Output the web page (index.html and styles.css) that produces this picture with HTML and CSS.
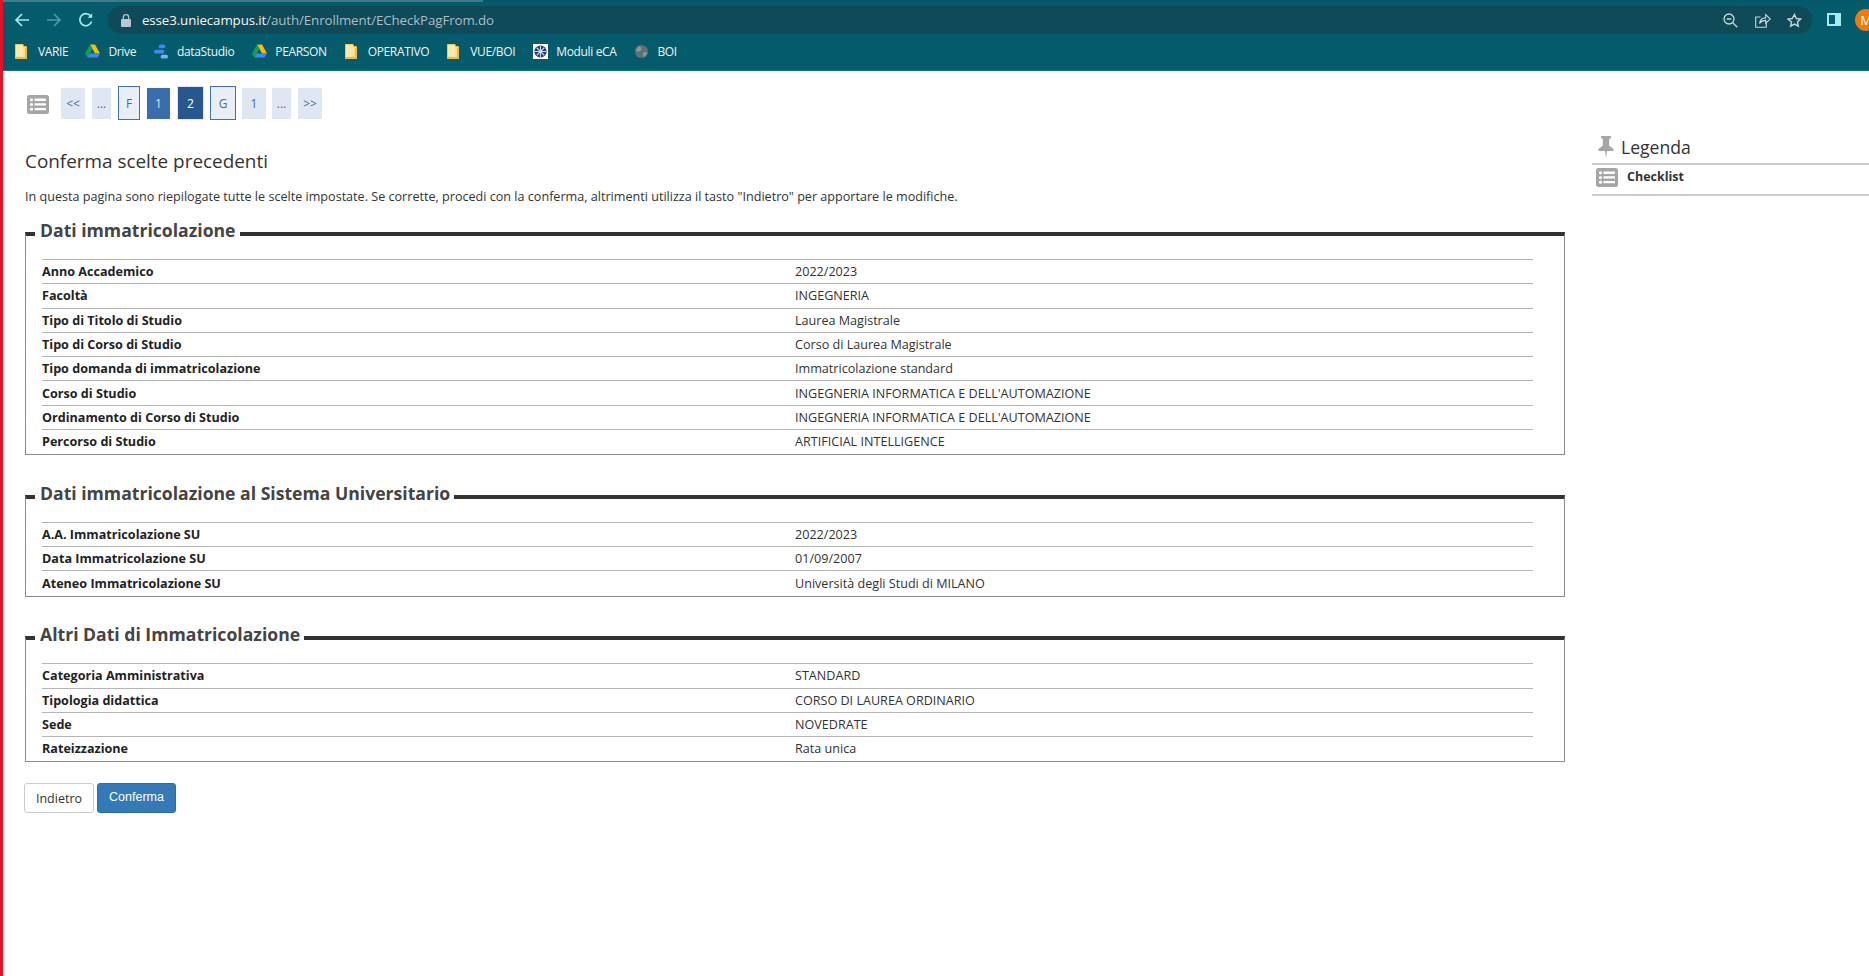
FILE: index.html
```html
<!DOCTYPE html>
<html lang="it">
<head>
<meta charset="utf-8">
<title>Conferma scelte precedenti</title>
<link rel="stylesheet" href="styles.css">
</head>
<body>
<svg class="defs" width="0" height="0" aria-hidden="true">
  <symbol id="folder" viewBox="0 0 12 15"><path d="M.5.5h7.5l.8 2.2h2.7v11.8H.5z" fill="#fde293" stroke="#f3c64c"/><path d="M1 .8h6.5v13.2H1z" fill="#fdeaa8"/><path d="M10 4h1.5v10.5H1V13h9z" fill="#eeb73c"/></symbol>
  <symbol id="drive" viewBox="0 0 16 15"><path d="M5.3 0h5.4l5.3 9.5h-5.3z" fill="#fbbc04"/><path d="M5.3 0 0 9.5 2.7 14l5.2-9.3z" fill="#0f9d58"/><path d="M5.2 9.5H16L13.3 14H2.7z" fill="#4285f4"/></symbol>
  <symbol id="list" viewBox="0 0 22 19"><rect width="22" height="19" rx="2.5" fill="#a6a6a6"/><g fill="#fff"><circle cx="4.5" cy="4.8" r="1.6"/><circle cx="4.5" cy="9.5" r="1.6"/><circle cx="4.5" cy="14.2" r="1.6"/><rect x="7.5" y="3.6" width="11.5" height="2.3" rx=".6"/><rect x="7.5" y="8.3" width="11.5" height="2.3" rx=".6"/><rect x="7.5" y="13" width="11.5" height="2.3" rx=".6"/></g></symbol>
</svg>
<div class="page">
  <header class="chrome">
    <div class="tabstrip"><div class="tab-edge"></div></div>
    <div class="toolbar">
      <svg class="nav" width="16" height="16" viewBox="0 0 16 16" fill="none" stroke="#a6e8e8" stroke-width="1.7"><path d="M15 8H2M8 2 2 8l6 6"/></svg>
      <svg class="nav" width="16" height="16" viewBox="0 0 16 16" fill="none" stroke="#4f9aa3" stroke-width="1.7"><path d="M1 8h13M8 2l6 6-6 6"/></svg>
      <svg class="nav" width="16" height="16" viewBox="0 0 16 16" fill="none" stroke="#a6e8e8" stroke-width="1.7"><path d="M13.600 9.500A6 6 0 1 1 12.600 4"/><path d="M14.200 1.200v4.600H9.600z" fill="#a6e8e8" stroke="none"/></svg>
      <div class="omnibox">
        <svg class="lock" width="10" height="13" viewBox="0 0 10 13"><path d="M2.300 5V3.400a2.700 2.700 0 0 1 5.400 0V5" fill="none" stroke="#b9c9cd" stroke-width="1.300"/><rect y="5" width="10" height="8" rx="1.200" fill="#b9c9cd"/></svg>
        <span class="url"><span class="host">esse3.uniecampus.it</span>/auth/Enrollment/ECheckPagFrom.do</span>
        <div class="omni-actions">
          <svg width="15" height="15" viewBox="0 0 15 15" fill="none" stroke="#c9d6d9" stroke-width="1.300"><circle cx="6" cy="6" r="5"/><path d="M3.700 6h4.600M9.700 9.700l4.600 4.600"/></svg>
          <svg width="16" height="15" viewBox="0 0 16 15" fill="none" stroke="#c9d6d9" stroke-width="1.100"><path d="M5.500 4H.7v10.300h10.600V10"/><path d="M4.500 10.500C5 7 7.500 4.900 10.700 4.900V1.600l4.600 4.400-4.600 4.200V7.400C8 7.400 6 8.400 4.500 10.500z"/></svg>
          <svg width="15" height="15" viewBox="0 0 24 24" fill="none" stroke="#c9d6d9" stroke-width="2.200"><path d="m12 2.500 2.900 6.300 6.900.8-5.100 4.700 1.400 6.800-6.100-3.400-6.100 3.400 1.400-6.800L1.300 9.600l6.900-.8z"/></svg>
        </div>
      </div>
      <div class="side-panel"></div>
      <div class="avatar">M</div>
    </div>
    <nav class="bookmarks">
      <span class="bm"><svg class="ico"><use href="#folder"/></svg>VARIE</span>
      <span class="bm"><svg class="ico ico-w"><use href="#drive"/></svg>Drive</span>
      <span class="bm"><svg class="ico ico-w" viewBox="0 0 16 15"><rect x="5" y="0" width="7" height="4" rx="2" fill="#4285f4"/><rect x="0" y="5.500" width="11" height="4" rx="2" fill="#4285f4"/><rect x="7" y="11" width="8" height="4" rx="2" fill="#7baaf7"/></svg>dataStudio</span>
      <span class="bm"><svg class="ico ico-w"><use href="#drive"/></svg>PEARSON</span>
      <span class="bm"><svg class="ico"><use href="#folder"/></svg>OPERATIVO</span>
      <span class="bm"><svg class="ico"><use href="#folder"/></svg>VUE/BOI</span>
      <span class="bm"><svg class="ico ico-w" viewBox="0 0 16 16"><rect width="16" height="16" fill="#fff"/><circle cx="8" cy="8" r="6.500" fill="#24386b"/><path d="M4 4l8 8M12 4l-8 8M8 2v12M2 8h12" stroke="#cfd7ea" stroke-width="1.200"/></svg>Moduli eCA</span>
      <span class="bm"><svg class="ico ico-w" viewBox="0 0 16 16"><circle cx="8" cy="8" r="7" fill="#5f6f75"/><path d="M5 2c3 1 4 3 2 5s-4 1-5 0M10 9c2-1 4 0 4 1l-3 4c-1-1-2-3-1-5z" fill="#8a979b"/></svg>BOI</span>
    </nav>
  </header>

  <div class="content">
    <main class="main">
      <div class="steps">
        <svg class="step-list"><use href="#list"/></svg>
        <span class="step s1">&lt;&lt;</span>
        <span class="step s2">...</span>
        <span class="step s3 outlined">F</span>
        <span class="step s4 done">1</span>
        <span class="step s5 current">2</span>
        <span class="step s6 outlined">G</span>
        <span class="step s7">1</span>
        <span class="step s2 s8">...</span>
        <span class="step s1 s9">&gt;&gt;</span>
      </div>
      <h1 class="title">Conferma scelte precedenti</h1>
      <p class="intro">In questa pagina sono riepilogate tutte le scelte impostate. Se corrette, procedi con la conferma, altrimenti utilizza il tasto "Indietro" per apportare le modifiche.</p>

      <fieldset class="box">
        <legend>Dati immatricolazione</legend>
        <dl class="rows">
          <div class="row"><dt>Anno Accademico</dt><dd>2022/2023</dd></div>
          <div class="row"><dt>Facoltà</dt><dd>INGEGNERIA</dd></div>
          <div class="row"><dt>Tipo di Titolo di Studio</dt><dd>Laurea Magistrale</dd></div>
          <div class="row"><dt>Tipo di Corso di Studio</dt><dd>Corso di Laurea Magistrale</dd></div>
          <div class="row"><dt>Tipo domanda di immatricolazione</dt><dd>Immatricolazione standard</dd></div>
          <div class="row"><dt>Corso di Studio</dt><dd>INGEGNERIA INFORMATICA E DELL'AUTOMAZIONE</dd></div>
          <div class="row"><dt>Ordinamento di Corso di Studio</dt><dd>INGEGNERIA INFORMATICA E DELL'AUTOMAZIONE</dd></div>
          <div class="row"><dt>Percorso di Studio</dt><dd>ARTIFICIAL INTELLIGENCE</dd></div>
        </dl>
      </fieldset>

      <fieldset class="box">
        <legend>Dati immatricolazione al Sistema Universitario</legend>
        <dl class="rows">
          <div class="row"><dt>A.A. Immatricolazione SU</dt><dd>2022/2023</dd></div>
          <div class="row"><dt>Data Immatricolazione SU</dt><dd>01/09/2007</dd></div>
          <div class="row"><dt>Ateneo Immatricolazione SU</dt><dd>Università degli Studi di MILANO</dd></div>
        </dl>
      </fieldset>

      <fieldset class="box">
        <legend>Altri Dati di Immatricolazione</legend>
        <dl class="rows">
          <div class="row"><dt>Categoria Amministrativa</dt><dd>STANDARD</dd></div>
          <div class="row"><dt>Tipologia didattica</dt><dd>CORSO DI LAUREA ORDINARIO</dd></div>
          <div class="row"><dt>Sede</dt><dd>NOVEDRATE</dd></div>
          <div class="row"><dt>Rateizzazione</dt><dd>Rata unica</dd></div>
        </dl>
      </fieldset>

      <div class="actions">
        <button class="btn btn-back" type="button">Indietro</button>
        <button class="btn btn-ok" type="button">Conferma</button>
      </div>
    </main>

    <aside class="aside">
      <h2 class="legend-title">
        <svg width="16" height="22" viewBox="0 0 16 22"><path d="M3 0h10v2l-1.800 1v6.500L15.500 13v2H9l-1 7-1-7H.5v-2l4.300-3.500V3L3 2z" fill="#a6a6a6"/></svg>
        Legenda
      </h2>
      <div class="legend-row">
        <svg class="step-list"><use href="#list"/></svg>
        <span>Checklist</span>
      </div>
    </aside>
  </div>
</div>
</body>
</html>
```
FILE: styles.css
```css
* { box-sizing: border-box; }
html, body { margin: 0; padding: 0; background: #fff; }
body { font-family: "Open Sans", "Liberation Sans", sans-serif; font-size: 13px; color: #333; overflow: hidden; }
.defs { display: block; height: 0; }
.page { border-left: 3px solid #e3112a; height: 976px; overflow: hidden; }

/* Browser chrome */
.chrome { height: 71px; background: #045b6c; border-bottom: 1px solid #0f7a88; }
.tabstrip { height: 2px; background: #04586a; }
.tab-edge { width: 480px; height: 2px; background: #3f7c88; }
.toolbar { height: 32px; padding-top: 4px; display: flex; align-items: flex-start; }
.nav { flex: none; margin-top: 6px; }
.nav:nth-child(1) { margin-left: 11px; }
.nav:nth-child(2) { margin-left: 16px; }
.nav:nth-child(3) { margin-left: 16px; }
.omnibox { flex: none; width: 1704px; height: 28px; margin-left: 14px; background: #0e4a58; border-radius: 14px; display: flex; align-items: center; padding-left: 13px; padding-right: 10px; color: #a9bfc4; }
.lock { flex: none; }
.url { margin-left: 11px; font-size: 13.300px; white-space: nowrap; letter-spacing: -.1px; }
.host { color: #f2f7f8; }
.omni-actions { margin-left: auto; display: flex; gap: 16.500px; align-items: center; }
.side-panel { flex: none; width: 14px; height: 13px; margin: 7px 0 0 15px; border: 2px solid #a5ecec; border-right-width: 6px; }
.avatar { flex: none; width: 22px; height: 22px; margin: 3px 0 0 14px; border-radius: 50%; background: #f07a0a; color: #fff; font-size: 13px; line-height: 22px; text-align: center; }

.bookmarks { display: flex; align-items: center; height: 36px; padding: 0 0 1px 12px; color: #f0f5f6; font-size: 12px; letter-spacing: -.35px; }
.bm { display: flex; align-items: center; margin-right: 18px; white-space: nowrap; }
.bm:first-child { margin-right: 17px; }
.ico { width: 12px; height: 15px; margin-right: 11px; flex: none; }
.ico-w { width: 15px; height: 15px; margin-right: 8px; }

/* Page */
.content { display: flex; align-items: flex-start; }
.main { width: 1562px; padding: 15px 0 0 22px; }
.steps { display: flex; align-items: center; height: 34px; color: #4a6a9b; font-size: 12px; }
.step-list { width: 22px; height: 19px; flex: none; display: block; }
.step { display: flex; align-items: center; justify-content: center; height: 31px; background: #dfe7f2; flex: none; }
.steps .step-list { margin: 3px 12px 0 2px; }
.s1 { width: 24px; }
.s2 { width: 19px; margin-left: 7px; }
.s3 { width: 22px; margin-left: 7px; }
.outlined { height: 34px; border: 1px solid #3f72ad; background: #e8eef6; }
.s4 { width: 23px; margin-left: 7px; }
.done { background: #3b6cac; color: #dfe7f2; }
.s5 { width: 27px; margin-left: 7px; }
.current { height: 34px; background: #28578f; color: #fff; border: 1px solid #dfe7f2; }
.s6 { width: 26px; margin-left: 6px; }
.s7 { width: 24px; margin-left: 6px; }
.s8 { margin-left: 6px; }
.s9 { margin-left: 7px; }

.title { font-size: 18.900px; font-weight: 400; line-height: 24px; margin: 29px 0 0; color: #333; }
.intro { margin: 15px 0 0; line-height: 18px; font-size: 12.600px; }

.box { margin: 12px 0 0; width: 1540px; padding: 9px 31px 1px 16px; border: 1px solid #8c8c8c; border-top: 4px solid #333; min-width: 0; }
.box + .box { margin-top: 25.500px; }
.box legend { margin-left: -7px; padding: 0 4px 8px 5px; font-size: 17.600px; font-weight: 700; line-height: 24px; color: #444; }
.rows { margin: 0; }
.row { display: flex; height: 24.300px; border-top: 1px solid #b5b5b5; align-items: center; }
.row dt { width: 753px; font-weight: 700; font-size: 12.600px; color: #222; flex: none; }
.row dd { margin: 0; font-size: 12.600px; }

.actions { display: flex; gap: 3px; margin: 21px 0 0 -1px; }
.btn { height: 30px; border-radius: 3px; font-size: 12.500px; padding: 0; }
.btn-back { width: 70px; background: #fff; border: 1px solid #ccc; color: #333; font-family: "Open Sans", sans-serif; }
.btn-ok { width: 79px; background: #337ab7; border: 1px solid #2e6da4; color: #fff; font-family: "Liberation Sans", Arial, sans-serif; padding-bottom: 2px; }

.aside { flex: 1; margin: 63px 0 0 27px; }
.legend-title { margin: 0; display: flex; align-items: center; gap: 7px; padding: 0 0 4px 6px; height: 31px; font-size: 17.600px; font-weight: 400; color: #333; border-bottom: 2px solid #ccc; }
.legend-row { display: flex; gap: 9px; height: 31px; padding: 3px 0 0 4px; font-weight: 700; font-size: 12.500px; border-bottom: 2px solid #ccc; line-height: 17px; }
```
